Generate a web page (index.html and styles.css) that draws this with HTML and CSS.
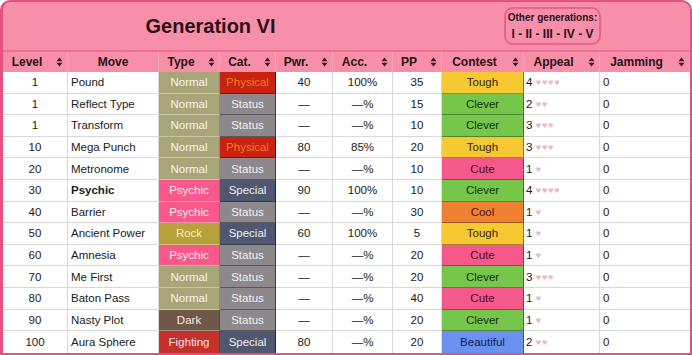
FILE: index.html
```html
<!DOCTYPE html>
<html lang="en">
<head>
<meta charset="utf-8">
<title>Generation VI learnset</title>
<link rel="stylesheet" href="styles.css">
</head>
<body>
<div class="learnset">
  <div class="titlebar">
    <h2 class="title">Generation VI</h2>
    <div class="othergen">
      <div class="og-label">Other generations:</div>
      <div class="og-links">I - II - III - IV - V</div>
    </div>
  </div>
  <table class="moves">
    <colgroup>
      <col class="c-level"><col class="c-move"><col class="c-type"><col class="c-cat"><col class="c-pwr">
      <col class="c-acc"><col class="c-pp"><col class="c-contest"><col class="c-appeal"><col class="c-jam">
    </colgroup>
    <thead>
      <tr>
        <th><div class="sort"><span>Level</span><svg viewBox="0 0 7 10" width="7" height="10"><path d="M0.5 4.2 L3.5 0.5 L6.5 4.2 Z M0.5 5.8 L3.5 9.5 L6.5 5.8 Z"/></svg></div></th>
        <th>Move</th>
        <th><div class="sort"><span>Type</span><svg viewBox="0 0 7 10" width="7" height="10"><path d="M0.5 4.2 L3.5 0.5 L6.5 4.2 Z M0.5 5.8 L3.5 9.5 L6.5 5.8 Z"/></svg></div></th>
        <th><div class="sort"><span>Cat.</span><svg viewBox="0 0 7 10" width="7" height="10"><path d="M0.5 4.2 L3.5 0.5 L6.5 4.2 Z M0.5 5.8 L3.5 9.5 L6.5 5.8 Z"/></svg></div></th>
        <th><div class="sort"><span>Pwr.</span><svg viewBox="0 0 7 10" width="7" height="10"><path d="M0.5 4.2 L3.5 0.5 L6.5 4.2 Z M0.5 5.8 L3.5 9.5 L6.5 5.8 Z"/></svg></div></th>
        <th><div class="sort"><span>Acc.</span><svg viewBox="0 0 7 10" width="7" height="10"><path d="M0.5 4.2 L3.5 0.5 L6.5 4.2 Z M0.5 5.8 L3.5 9.5 L6.5 5.8 Z"/></svg></div></th>
        <th><div class="sort"><span>PP</span><svg viewBox="0 0 7 10" width="7" height="10"><path d="M0.5 4.2 L3.5 0.5 L6.5 4.2 Z M0.5 5.8 L3.5 9.5 L6.5 5.8 Z"/></svg></div></th>
        <th><div class="sort"><span>Contest</span><svg viewBox="0 0 7 10" width="7" height="10"><path d="M0.5 4.2 L3.5 0.5 L6.5 4.2 Z M0.5 5.8 L3.5 9.5 L6.5 5.8 Z"/></svg></div></th>
        <th><div class="sort"><span>Appeal</span><svg viewBox="0 0 7 10" width="7" height="10"><path d="M0.5 4.2 L3.5 0.5 L6.5 4.2 Z M0.5 5.8 L3.5 9.5 L6.5 5.8 Z"/></svg></div></th>
        <th><div class="sort"><span>Jamming</span><svg viewBox="0 0 7 10" width="7" height="10"><path d="M0.5 4.2 L3.5 0.5 L6.5 4.2 Z M0.5 5.8 L3.5 9.5 L6.5 5.8 Z"/></svg></div></th>
      </tr>
    </thead>
    <tbody>
      <tr><td>1</td><td class="mv">Pound</td><td class="t-normal">Normal</td><td class="k-phys">Physical</td><td>40</td><td>100%</td><td>35</td><td class="ct-tough">Tough</td><td class="ap">4 <span class="hearts">♥♥♥♥</span></td><td class="jam">0</td></tr>
      <tr><td>1</td><td class="mv">Reflect Type</td><td class="t-normal">Normal</td><td class="k-status">Status</td><td>—</td><td>—%</td><td>15</td><td class="ct-clever">Clever</td><td class="ap">2 <span class="hearts">♥♥</span></td><td class="jam">0</td></tr>
      <tr><td>1</td><td class="mv">Transform</td><td class="t-normal">Normal</td><td class="k-status">Status</td><td>—</td><td>—%</td><td>10</td><td class="ct-clever">Clever</td><td class="ap">3 <span class="hearts">♥♥♥</span></td><td class="jam">0</td></tr>
      <tr><td>10</td><td class="mv">Mega Punch</td><td class="t-normal">Normal</td><td class="k-phys">Physical</td><td>80</td><td>85%</td><td>20</td><td class="ct-tough">Tough</td><td class="ap">3 <span class="hearts">♥♥♥</span></td><td class="jam">0</td></tr>
      <tr><td>20</td><td class="mv">Metronome</td><td class="t-normal">Normal</td><td class="k-status">Status</td><td>—</td><td>—%</td><td>10</td><td class="ct-cute">Cute</td><td class="ap">1 <span class="hearts">♥</span></td><td class="jam">0</td></tr>
      <tr><td>30</td><td class="mv stab">Psychic</td><td class="t-psychic">Psychic</td><td class="k-special">Special</td><td>90</td><td>100%</td><td>10</td><td class="ct-clever">Clever</td><td class="ap">4 <span class="hearts">♥♥♥♥</span></td><td class="jam">0</td></tr>
      <tr><td>40</td><td class="mv">Barrier</td><td class="t-psychic">Psychic</td><td class="k-status">Status</td><td>—</td><td>—%</td><td>30</td><td class="ct-cool">Cool</td><td class="ap">1 <span class="hearts">♥</span></td><td class="jam">0</td></tr>
      <tr><td>50</td><td class="mv">Ancient Power</td><td class="t-rock">Rock</td><td class="k-special">Special</td><td>60</td><td>100%</td><td>5</td><td class="ct-tough">Tough</td><td class="ap">1 <span class="hearts">♥</span></td><td class="jam">0</td></tr>
      <tr><td>60</td><td class="mv">Amnesia</td><td class="t-psychic">Psychic</td><td class="k-status">Status</td><td>—</td><td>—%</td><td>20</td><td class="ct-cute">Cute</td><td class="ap">1 <span class="hearts">♥</span></td><td class="jam">0</td></tr>
      <tr><td>70</td><td class="mv">Me First</td><td class="t-normal">Normal</td><td class="k-status">Status</td><td>—</td><td>—%</td><td>20</td><td class="ct-clever">Clever</td><td class="ap">3 <span class="hearts">♥♥♥</span></td><td class="jam">0</td></tr>
      <tr><td>80</td><td class="mv">Baton Pass</td><td class="t-normal">Normal</td><td class="k-status">Status</td><td>—</td><td>—%</td><td>40</td><td class="ct-cute">Cute</td><td class="ap">1 <span class="hearts">♥</span></td><td class="jam">0</td></tr>
      <tr><td>90</td><td class="mv">Nasty Plot</td><td class="t-dark">Dark</td><td class="k-status">Status</td><td>—</td><td>—%</td><td>20</td><td class="ct-clever">Clever</td><td class="ap">1 <span class="hearts">♥</span></td><td class="jam">0</td></tr>
      <tr><td>100</td><td class="mv">Aura Sphere</td><td class="t-fighting">Fighting</td><td class="k-special">Special</td><td>80</td><td>—%</td><td>20</td><td class="ct-beautiful">Beautiful</td><td class="ap">2 <span class="hearts">♥♥</span></td><td class="jam">0</td></tr>
    </tbody>
  </table>
</div>
</body>
</html>
```
FILE: styles.css
```css
html, body {
  margin: 0;
  padding: 0;
  background: #ffffff;
}
body {
  font-family: "Liberation Sans", Arial, "DejaVu Sans", sans-serif;
  color: #1a1a1a;
}
.learnset {
  width: 692px;
  box-sizing: border-box;
  background: #f78fa9;
  border-style: solid;
  border-color: #e3527f;
  border-width: 2px 2px 3px 3px;
  border-radius: 10px 10px 0 0;
  overflow: hidden;
}
.titlebar {
  height: 48px;
  display: flex;
  align-items: center;
  border-bottom: 2px solid #ec6f95;
}
.title {
  flex: 0 0 415px;
  margin: 0;
  text-align: center;
  font-size: 20px;
  font-weight: bold;
  color: #2a1016;
}
.othergen {
  margin-left: 86px;
  width: 97px;
  height: 38px;
  box-sizing: border-box;
  border: 2px solid #e8648e;
  border-radius: 9px;
  display: flex;
  flex-direction: column;
  justify-content: center;
  align-items: center;
  color: #2a1016;
  font-weight: bold;
}
.og-label {
  font-size: 10px;
  line-height: 16px;
}
.og-links {
  font-size: 12px;
  line-height: 16px;
}
.moves {
  width: 687px;
  table-layout: fixed;
  border-collapse: separate;
  border-spacing: 0;
  font-size: 11.5px;
}
.c-level { width: 65px; }
.c-move { width: 91px; }
.c-type { width: 61px; }
.c-cat { width: 56px; }
.c-pwr { width: 57px; }
.c-acc { width: 60px; }
.c-pp { width: 49px; }
.c-contest { width: 82px; }
.c-appeal { width: 76px; }
.c-jam { width: 90px; }

.moves thead tr { height: 20px; }
.moves th {
  padding: 0;
  font-size: 12px;
  font-weight: bold;
  color: #2a1016;
  text-align: center;
  background: #f78fa9;
  border-right: 1px solid rgba(255, 255, 255, 0.18);
}
.sort {
  display: grid;
  grid-template-columns: 1fr 7px;
  column-gap: 5px;
  align-items: center;
  padding-right: 4px;
}
.sort svg { fill: #3a1822; display: block; }

.moves tbody tr { height: 21.6px; }
.moves td {
  padding: 0;
  text-align: center;
  background: #ffffff;
  border-right: 1px solid #d8d8d8;
  border-bottom: 1px solid #d8d8d8;
  white-space: nowrap;
  overflow: hidden;
}
.moves tbody tr:last-child td { border-bottom: none; }
.moves td:last-child { border-right: none; }
.moves td.mv { text-align: left; padding-left: 3px; }
.moves td.stab { font-weight: bold; }
.moves td.ap { text-align: left; padding-left: 2px; }
.moves td.jam { text-align: left; padding-left: 3px; }
.hearts {
  font-family: "DejaVu Sans", sans-serif;
  font-size: 6.5px;
  color: #ebb9c5;
  letter-spacing: 0.3px;
  vertical-align: 1px;
}

/* types */
.moves td.t-normal, .moves td.t-psychic, .moves td.t-rock, .moves td.t-dark, .moves td.t-fighting {
  border-bottom-color: rgba(255, 255, 255, 0.35);
  border-right-color: rgba(0, 0, 0, 0.15);
}
.moves td.t-normal { background: #a8a679; color: #f6f6ee; }
.moves td.t-psychic { background: #f6598a; color: #fde8ef; }
.moves td.t-rock { background: #b8a03a; color: #f8f0b8; }
.moves td.t-dark { background: #705848; color: #f4ece6; }
.moves td.t-fighting { background: #c4302a; color: #fbe2e0; }

/* categories */
.moves td.k-phys, .moves td.k-special, .moves td.k-status {
  border-bottom-color: rgba(0, 0, 0, 0.35);
  border-right-color: rgba(0, 0, 0, 0.55);
}
.moves td.k-phys { background: #c92112; color: #f67a1a; }
.moves td.k-special { background: #4f5870; color: #eceef4; }
.moves td.k-status { background: #8c888c; color: #f2f2f2; }

/* contest */
.moves td.ct-tough, .moves td.ct-clever, .moves td.ct-cute, .moves td.ct-cool, .moves td.ct-beautiful {
  border-bottom-color: rgba(0, 0, 0, 0.32);
  border-right-color: rgba(0, 0, 0, 0.4);
}
.moves td.ct-tough { background: #f6c832; color: #33270a; }
.moves td.ct-clever { background: #76c64c; color: #13300a; }
.moves td.ct-cute { background: #f5588a; color: #52081e; }
.moves td.ct-cool { background: #ef8032; color: #441604; }
.moves td.ct-beautiful { background: #6a90f0; color: #0e1c58; }
```
